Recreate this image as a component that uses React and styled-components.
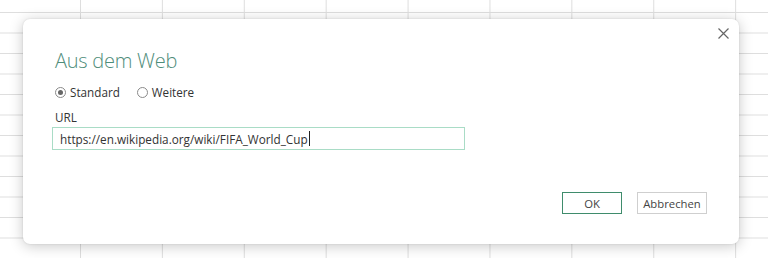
import React from 'react';
import styled, { createGlobalStyle } from 'styled-components';

const Global = createGlobalStyle`
  html, body { margin: 0; padding: 0; background: #fff; }
  body { font-family: "Open Sans", "Noto Sans", sans-serif; }
`;

const Sheet = styled.div`
  width: 768px;
  height: 258px;
  box-sizing: border-box;
  padding: 19px 0 0 23px;
  background-color: #fff;
  background-image:
    linear-gradient(to right, #dedede 1px, transparent 1px),
    linear-gradient(to bottom, #dedede 1px, transparent 1px);
  background-size: 81.9px 100%, 100% 20.5px;
  background-position: 80px 0, 0 12px;
`;

const Dialog = styled.div`
  position: relative;
  width: 716px;
  height: 225px;
  box-sizing: border-box;
  background: #fff;
  border-radius: 7px;
  box-shadow: 0 2px 14px rgba(0, 0, 0, 0.22), 0 0 2px rgba(0, 0, 0, 0.12);
  padding: 29px 0 0 32px;
  display: flex;
  flex-direction: column;
`;

const Close = styled.button`
  position: absolute;
  top: 6px;
  right: 8px;
  width: 16px;
  height: 16px;
  padding: 0;
  border: none;
  background: none;
  display: flex;
  align-items: center;
  justify-content: center;
`;

const Title = styled.h2`
  margin: 0;
  font-family: "Open Sans", sans-serif;
  font-weight: 300;
  font-size: 20px;
  letter-spacing: -0.25px;
  line-height: 26px;
  color: #4f8d7a;
`;

const RadioRow = styled.div`
  display: flex;
  gap: 17px;
  margin-top: 10px;
  align-items: center;
`;

const RadioOption = styled.label`
  display: flex;
  align-items: center;
  gap: 4px;
  font-size: 11.7px;
  color: #333;
`;

const Circle = styled.span`
  width: 9px;
  height: 9px;
  border-radius: 50%;
  border: 1px solid #8a8a8a;
  display: flex;
  align-items: center;
  justify-content: center;
  &::after {
    content: '';
    width: 5px;
    height: 5px;
    border-radius: 50%;
    background: ${p => (p.checked ? '#666' : 'transparent')};
  }
`;

const Label = styled.div`
  margin-top: 9px;
  font-size: 11.7px;
  color: #333;
  line-height: 16px;
`;

const UrlBox = styled.div`
  margin-top: 2px;
  margin-left: -3px;
  width: 413px;
  height: 23px;
  box-sizing: border-box;
  border: 1px solid #a9dcc6;
  padding: 0 7px;
  display: flex;
  align-items: center;
  font-size: 11.75px;
  color: #333;
`;

const Caret = styled.span`
  display: inline-block;
  width: 1px;
  height: 15px;
  background: #222;
  margin-left: 1px;
`;

const Footer = styled.div`
  margin-top: auto;
  margin-bottom: 30px;
  margin-right: 32px;
  display: flex;
  justify-content: flex-end;
  gap: 15px;
`;

const Button = styled.button`
  width: ${p => p.w}px;
  height: 22px;
  box-sizing: border-box;
  background: #fff;
  border: 1px solid ${p => (p.primary ? '#3f8c6c' : '#cfcfcf')};
  font-family: "Open Sans", sans-serif;
  font-size: 11.3px;
  color: #444;
  padding: 0;
`;

export default function App() {
  return (
    <>
      <Global />
      <Sheet>
        <Dialog>
          <Close aria-label="Schließen">
            <svg width="11" height="11" viewBox="0 0 11 11">
              <path d="M0.5 0.5 L10.5 10.5 M10.5 0.5 L0.5 10.5" stroke="#666" strokeWidth="1.2" fill="none" />
            </svg>
          </Close>
          <Title>Aus dem Web</Title>
          <RadioRow>
            <RadioOption><Circle checked />Standard</RadioOption>
            <RadioOption><Circle />Weitere</RadioOption>
          </RadioRow>
          <Label>URL</Label>
          <UrlBox>https://en.wikipedia.org/wiki/FIFA_World_Cup<Caret /></UrlBox>
          <Footer>
            <Button primary w={60}>OK</Button>
            <Button w={70}>Abbrechen</Button>
          </Footer>
        </Dialog>
      </Sheet>
    </>
  );
}
